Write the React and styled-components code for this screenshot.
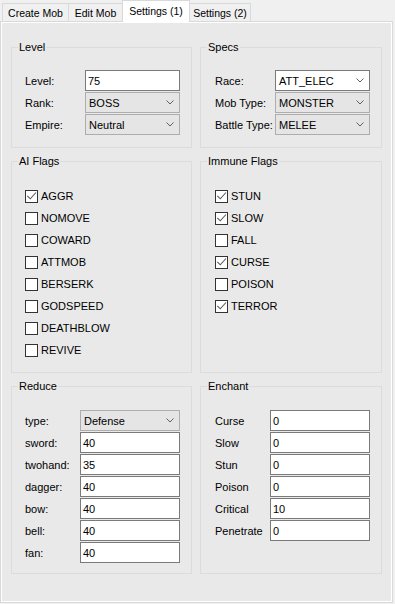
import React from "react";
import styled, { createGlobalStyle } from "styled-components";

const GlobalStyle = createGlobalStyle`
  html, body {
    margin: 0;
    padding: 0;
    background: #f0f0f0;
  }
  body {
    font-family: "Liberation Sans", Arial, sans-serif;
    font-size: 11px;
    color: #000;
  }
`;

const PAGE_BG = "#e9e9e9";

const Window = styled.div`
  width: 395px;
  height: 604px;
  background: #f0f0f0;
  overflow: hidden;
`;

const TabStrip = styled.div`
  display: flex;
  align-items: flex-end;
  height: 21px;
  padding-left: 2px;
  position: relative;
  z-index: 1;
`;

const Tab = styled.div`
  box-sizing: border-box;
  width: ${(p) => p.$w}px;
  height: ${(p) => (p.$active ? 22 : 18)}px;
  margin-left: -1px;
  margin-bottom: ${(p) => (p.$active ? -1 : 0)}px;
  padding-bottom: ${(p) => (p.$active ? 2 : 0)}px;
  border: 1px solid #d9d9d9;
  border-bottom: none;
  background: ${(p) => (p.$active ? "#fff" : "#f0f0f0")};
  display: flex;
  align-items: center;
  justify-content: center;
  white-space: nowrap;
  font-size: 10.5px;
  z-index: ${(p) => (p.$active ? 2 : 1)};

  &:first-child {
    margin-left: 0;
  }
`;

const Panel = styled.div`
  box-sizing: border-box;
  width: 393px;
  height: 582px;
  border: 1px solid #d9d9d9;
  background: #fff;
  padding: 1px;
`;

const Page = styled.div`
  box-sizing: border-box;
  height: 100%;
  background: ${PAGE_BG};
  padding: 24px 0 0 9px;
  display: grid;
  grid-template-columns: 181px 182px;
  grid-template-rows: 101px 212px 188px;
  column-gap: 8px;
  row-gap: 13px;
  align-content: start;
`;

const Group = styled.div`
  box-sizing: border-box;
  border: 1px solid #dcdcdc;
`;

const Legend = styled.div`
  width: fit-content;
  height: 13px;
  line-height: 13px;
  margin: -7px 0 0 6px;
  padding: 0 1px;
  background: ${PAGE_BG};
`;

const Form = styled.div`
  display: grid;
  grid-template-columns: ${(p) => p.$label}px ${(p) => p.$field}px;
  grid-auto-rows: 21px;
  row-gap: 1px;
  align-items: center;
  padding: ${(p) => p.$top}px 0 0 ${(p) => p.$left}px;
`;

const Label = styled.span`
  white-space: nowrap;
`;

const TextBox = styled.input`
  box-sizing: border-box;
  width: 100%;
  height: 21px;
  margin: 0;
  padding: 0 2px;
  border: 1px solid #7a7a7a;
  border-radius: 0;
  background: #fff;
  font: inherit;
  color: #000;
  outline: none;
`;

const Combo = styled.div`
  box-sizing: border-box;
  height: 21px;
  border: 1px solid ${(p) => (p.$focus ? "#7a7a7a" : "#adadad")};
  background: ${(p) => (p.$focus ? "#fff" : "#e5e5e5")};
  display: flex;
  align-items: center;
  justify-content: space-between;
  padding: 0 5px 0 3px;
`;

const Chevron = () => (
  <svg width="8" height="5" viewBox="0 0 8 5">
    <polyline points="0.5,0.5 4,4 7.5,0.5" fill="none" stroke="#606060" strokeWidth="1" />
  </svg>
);

const CheckList = styled.div`
  display: flex;
  flex-direction: column;
  padding: ${(p) => p.$top}px 0 0 ${(p) => p.$left}px;
`;

const CheckRow = styled.label`
  display: flex;
  align-items: center;
  gap: 3px;
  height: 22px;
`;

const Box = styled.span`
  box-sizing: border-box;
  width: 13px;
  height: 13px;
  border: 1px solid #333;
  background: #fff;
  display: flex;
`;

const Check = ({ on }) => (
  <Box>
    {on && (
      <svg width="11" height="11" viewBox="0 0 11 11">
        <polyline points="1.3,4.8 4.3,7.8 10,1.5" fill="none" stroke="#5a5a5a" strokeWidth="1.1" />
      </svg>
    )}
  </Box>
);

function Field({ label, value }) {
  return (
    <>
      <Label>{label}</Label>
      <TextBox defaultValue={value} readOnly />
    </>
  );
}

function Select({ label, value, focus }) {
  return (
    <>
      <Label>{label}</Label>
      <Combo $focus={focus}>
        <span>{value}</span>
        <Chevron />
      </Combo>
    </>
  );
}

function Flags({ items, left }) {
  return (
    <CheckList $top={17} $left={left}>
      {items.map(([name, on]) => (
        <CheckRow key={name}>
          <Check on={on} />
          {name}
        </CheckRow>
      ))}
    </CheckList>
  );
}

const aiFlags = [
  ["AGGR", true],
  ["NOMOVE", false],
  ["COWARD", false],
  ["ATTMOB", false],
  ["BERSERK", false],
  ["GODSPEED", false],
  ["DEATHBLOW", false],
  ["REVIVE", false],
];

const immuneFlags = [
  ["STUN", true],
  ["SLOW", true],
  ["FALL", false],
  ["CURSE", true],
  ["POISON", false],
  ["TERROR", true],
];

const reduce = [
  ["sword:", "40"],
  ["twohand:", "35"],
  ["dagger:", "40"],
  ["bow:", "40"],
  ["bell:", "40"],
  ["fan:", "40"],
];

const enchant = [
  ["Curse", "0"],
  ["Slow", "0"],
  ["Stun", "0"],
  ["Poison", "0"],
  ["Critical", "10"],
  ["Penetrate", "0"],
];

export default function App() {
  return (
    <Window>
      <GlobalStyle />
      <TabStrip>
        <Tab $w={67}>Create Mob</Tab>
        <Tab $w={55}>Edit Mob</Tab>
        <Tab $w={68} $active>
          Settings (1)
        </Tab>
        <Tab $w={62}>Settings (2)</Tab>
      </TabStrip>
      <Panel>
        <Page>
          <Group>
            <Legend>Level</Legend>
            <Form $label={60} $field={95} $top={16} $left={13}>
              <Field label="Level:" value="75" />
              <Select label="Rank:" value="BOSS" />
              <Select label="Empire:" value="Neutral" />
            </Form>
          </Group>
          <Group>
            <Legend>Specs</Legend>
            <Form $label={60} $field={95} $top={16} $left={14}>
              <Select label="Race:" value="ATT_ELEC" focus />
              <Select label="Mob Type:" value="MONSTER" />
              <Select label="Battle Type:" value="MELEE" />
            </Form>
          </Group>
          <Group>
            <Legend>AI Flags</Legend>
            <Flags items={aiFlags} left={13} />
          </Group>
          <Group>
            <Legend>Immune Flags</Legend>
            <Flags items={immuneFlags} left={14} />
          </Group>
          <Group>
            <Legend>Reduce</Legend>
            <Form $label={55} $field={100} $top={17} $left={13}>
              <Select label="type:" value="Defense" />
              {reduce.map(([l, v]) => (
                <Field key={l} label={l} value={v} />
              ))}
            </Form>
          </Group>
          <Group>
            <Legend>Enchant</Legend>
            <Form $label={55} $field={100} $top={17} $left={14}>
              {enchant.map(([l, v]) => (
                <Field key={l} label={l} value={v} />
              ))}
            </Form>
          </Group>
        </Page>
      </Panel>
    </Window>
  );
}
